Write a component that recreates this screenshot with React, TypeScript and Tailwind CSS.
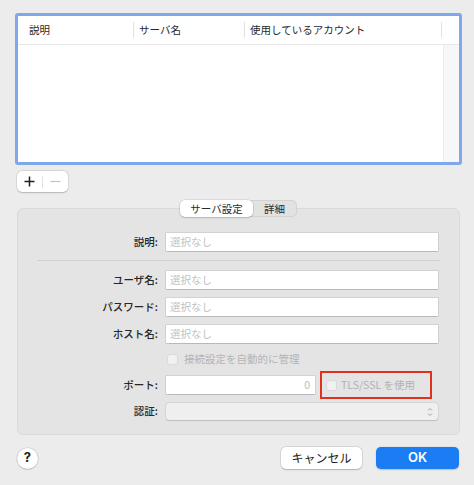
import React from "react";

const FONT = "font-['Noto_Sans_CJK_JP','Liberation_Sans',sans-serif]";

function Field({ w = "w-[272px]", children }: { w?: string; children?: React.ReactNode }) {
  return (
    <div
      className={`${w} h-[18px] bg-white flex items-center pl-[4px] text-[10.5px] text-[#c2c2c2] shadow-[0_0_0_0.5px_rgba(0,0,0,0.16),0_0.5px_1px_rgba(0,0,0,0.12)]`}
    >
      {children}
    </div>
  );
}

function Label({ children }: { children: React.ReactNode }) {
  return (
    <div className="w-[140px] text-right text-[10.5px] font-medium text-[#262626] leading-none">{children}</div>
  );
}

function Check() {
  return <div className="w-[11px] h-[11px] rounded-[3px] bg-[#f1f1f1] border border-[#dadada] shrink-0" />;
}

export default function App() {
  return (
    <div className={`w-[474px] h-[485px] bg-[#ececec] ${FONT} text-[#262626] flex flex-col pl-[15px] pt-[13px] overflow-hidden`}>
      {/* table */}
      <div className="w-[447px] h-[152px] border-[3px] border-[#7fa7ec] rounded-[3px] bg-white flex flex-col">
        <div className="h-[29px] flex items-center border-b border-[#e7e7e7] text-[10.5px] text-[#2a2a2a] shrink-0">
          <div className="w-[116px] pl-[11px] flex items-center justify-between">
            <span>説明</span>
            <span className="w-px h-[16px] bg-[#e1e1e1]" />
          </div>
          <div className="w-[111px] pl-[5px] flex items-center justify-between">
            <span>サーバ名</span>
            <span className="w-px h-[16px] bg-[#e1e1e1]" />
          </div>
          <div className="w-[197px] pl-[5px] flex items-center justify-between">
            <span>使用しているアカウント</span>
            <span className="w-px h-[16px] bg-[#e1e1e1]" />
          </div>
        </div>
        <div className="flex-1 flex">
          <div className="flex-1" />
          <div className="w-[16px] bg-[#f7f7f7] border-l border-[#ededed]" />
        </div>
      </div>

      {/* + - */}
      <div className="mt-[6px] ml-[2px] w-[51px] h-[21px] rounded-[5px] bg-white flex items-center shadow-[0_0_0_0.5px_rgba(0,0,0,0.12),0_0.5px_1.5px_rgba(0,0,0,0.18)]">
        <div className="w-[25px] flex justify-center">
          <svg width="11" height="11" viewBox="0 0 11 11">
            <path d="M5.5 0.5V10.5M0.5 5.5H10.5" stroke="#1e1e1e" strokeWidth="1.5" />
          </svg>
        </div>
        <div className="w-px h-[12px] bg-[#e2e2e2]" />
        <div className="flex-1 flex justify-center">
          <svg width="11" height="11" viewBox="0 0 11 11">
            <path d="M0.5 5.5H10.5" stroke="#c4c4c4" strokeWidth="1.2" />
          </svg>
        </div>
      </div>

      {/* tab box */}
      <div className="ml-[2px] w-[443px] mt-[8px] flex flex-col">
        <div className="relative z-10 self-center h-[17px] -mb-[9px] flex rounded-[5px] bg-[#e2e2e2] border border-[#d3d3d3] text-[10.5px] text-[#2a2a2a]">
          <div className="w-[73px] -my-px -ml-px h-[17px] bg-white rounded-[5px] flex items-center justify-center shadow-[0_0_0_0.5px_rgba(0,0,0,0.15),0_1px_1.5px_rgba(0,0,0,0.15)]">
            サーバ設定
          </div>
          <div className="w-[43px] flex items-center justify-center">詳細</div>
        </div>

        <div className="h-[227px] bg-[#e4e4e4] border border-[#dadada] rounded-[6px] flex flex-col pt-[24px]">
          <div className="flex items-center h-[18px]">
            <Label>説明:</Label>
            <div className="ml-[8px]">
              <Field>選択なし</Field>
            </div>
          </div>

          <div className="mt-[9px] ml-[19px] w-[403px] h-px bg-[#d0d0d0]" />

          <div className="flex items-center h-[18px] mt-[10px]">
            <Label>ユーザ名:</Label>
            <div className="ml-[8px]">
              <Field>選択なし</Field>
            </div>
          </div>
          <div className="flex items-center h-[18px] mt-[9px]">
            <Label>パスワード:</Label>
            <div className="ml-[8px]">
              <Field>選択なし</Field>
            </div>
          </div>
          <div className="flex items-center h-[18px] mt-[9px]">
            <Label>ホスト名:</Label>
            <div className="ml-[8px]">
              <Field>選択なし</Field>
            </div>
          </div>

          <div className="flex items-center h-[15px] mt-[9px] ml-[149px]">
            <Check />
            <span className="ml-[6px] text-[10.5px] text-[#b4b4b4] leading-none">接続設定を自動的に管理</span>
          </div>

          <div className="flex items-center h-[18px] mt-[9px]">
            <Label>ポート:</Label>
            <div className="ml-[8px]">
              <Field w="w-[149px]">
                <span className="ml-auto pr-[5px] text-[#bcbcbc]">0</span>
              </Field>
            </div>
            <div className="ml-[5px] w-[112px] h-[28px] -my-[5px] border-2 border-[#e0311f] flex items-center pl-[4px]">
              <Check />
              <span className="ml-[4px] text-[10.5px] text-[#b2b2b2] leading-none">TLS/SSL を使用</span>
            </div>
          </div>

          <div className="flex items-center h-[17px] mt-[9px]">
            <Label>認証:</Label>
            <div className="ml-[8px] w-[272px] h-[17px] bg-[#efefef] rounded-[3px] flex items-center justify-end pr-[5px] shadow-[0_0_0_0.5px_rgba(0,0,0,0.1),0_0.5px_1px_rgba(0,0,0,0.12)]">
              <svg width="6" height="10" viewBox="0 0 6 10">
                <path d="M1 3.5L3 1.5L5 3.5M1 6.5L3 8.5L5 6.5" stroke="#a3a3a3" strokeWidth="1" fill="none" />
              </svg>
            </div>
          </div>
        </div>
      </div>

      {/* bottom buttons */}
      <div className="mt-[12px] ml-[2px] w-[442px] h-[22px] flex items-center">
        <div className="w-[21px] h-[21px] rounded-full bg-white flex items-center justify-center font-['Inter',sans-serif] font-bold text-[13px] text-[#222] shadow-[0_0_0_0.5px_rgba(0,0,0,0.12),0_0.5px_1.5px_rgba(0,0,0,0.2)]">
          ?
        </div>
        <div className="flex-1" />
        <div className="w-[81px] h-[22px] rounded-[5px] bg-white flex items-center justify-center text-[12px] text-[#222] shadow-[0_0_0_0.5px_rgba(0,0,0,0.12),0_0.5px_1.5px_rgba(0,0,0,0.2)]">
          キャンセル
        </div>
        <div className="ml-[14px] w-[83px] h-[22px] rounded-[5px] bg-[#1a7df4] flex items-center justify-center font-['Inter',sans-serif] font-semibold text-[13px] text-white shadow-[0_0.5px_1.5px_rgba(0,0,0,0.2)]">
          OK
        </div>
      </div>
    </div>
  );
}
